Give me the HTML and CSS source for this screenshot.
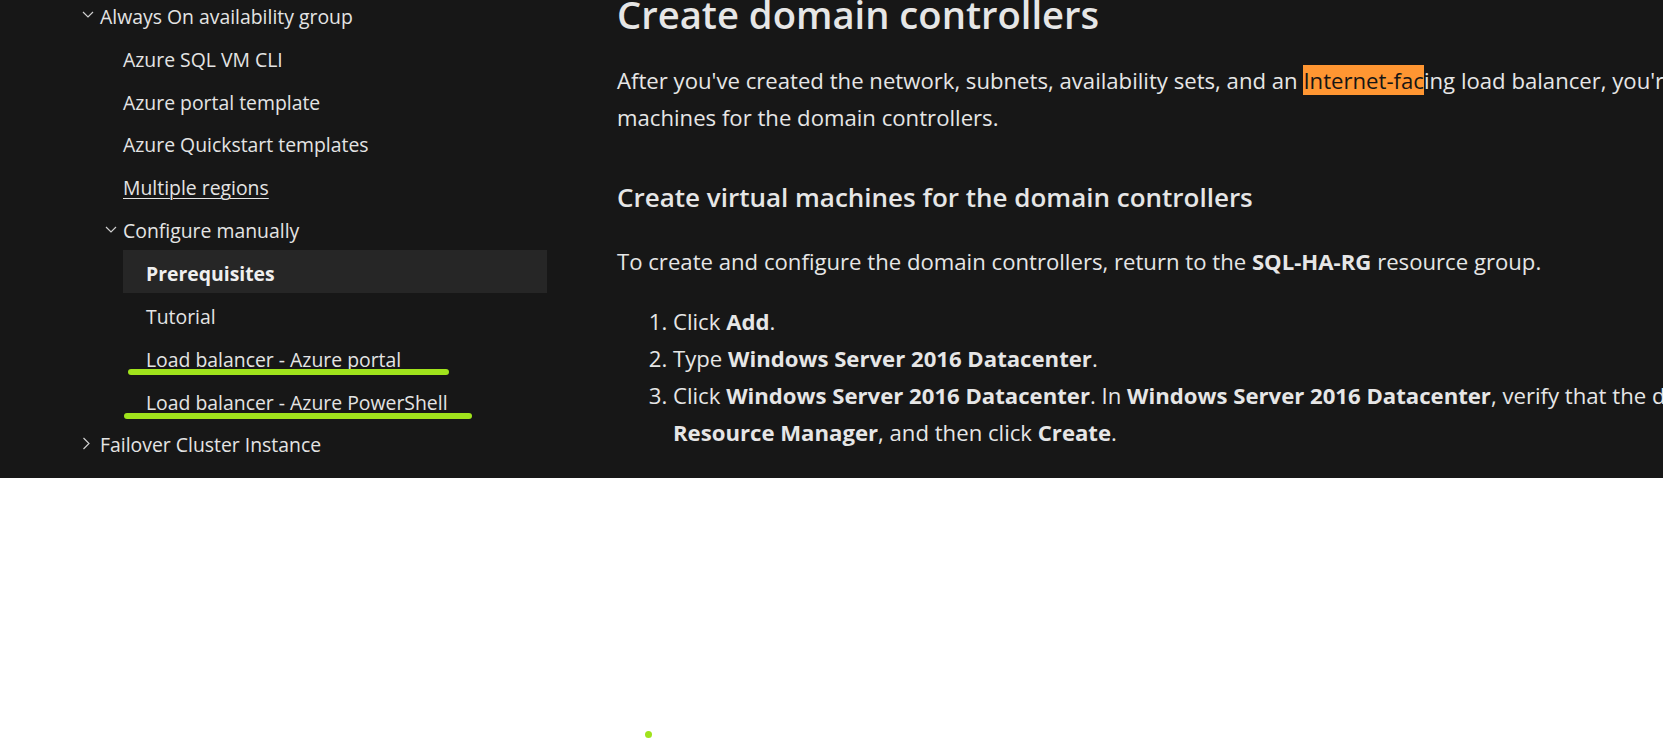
FILE: index.html
```html
<!DOCTYPE html>
<html lang="en">
<head>
<meta charset="utf-8">
<title>Create domain controllers</title>
<link rel="stylesheet" href="styles.css">
</head>
<body>
<div class="frame">
  <nav class="toc">
    <ul class="toc-list">
      <li class="row lvl1"><span class="chev"><svg width="12" height="7" viewBox="0 0 12 7"><path d="M1 1l5 5 5-5" fill="none" stroke="#cfcfcf" stroke-width="1.2"/></svg></span><span>Always On availability group</span></li>
      <li class="row lvl2"><span class="chev"></span><span>Azure SQL VM CLI</span></li>
      <li class="row lvl2"><span class="chev"></span><span>Azure portal template</span></li>
      <li class="row lvl2"><span class="chev"></span><span>Azure Quickstart templates</span></li>
      <li class="row lvl2"><span class="chev"></span><span class="link">Multiple regions</span></li>
      <li class="row lvl2"><span class="chev"><svg width="12" height="7" viewBox="0 0 12 7"><path d="M1 1l5 5 5-5" fill="none" stroke="#cfcfcf" stroke-width="1.2"/></svg></span><span>Configure manually</span></li>
      <li class="row lvl3 active"><span>Prerequisites</span></li>
      <li class="row lvl3"><span>Tutorial</span></li>
      <li class="row lvl3"><span>Load balancer - Azure portal</span><span class="mark mark-a"></span></li>
      <li class="row lvl3"><span>Load balancer - Azure PowerShell</span><span class="mark mark-b"></span></li>
      <li class="row lvl1"><span class="chev"><svg width="8" height="13" viewBox="0 0 8 13"><path d="M1.5 1l5.5 5.5-5.5 5.5" fill="none" stroke="#cfcfcf" stroke-width="1.2"/></svg></span><span>Failover Cluster Instance</span></li>
    </ul>
  </nav>
  <main class="article">
    <h1>Create domain controllers</h1>
    <p class="intro">After you've created the network, subnets, availability sets, and an <mark class="find">Internet-fac</mark>ing load balancer, you're ready to create virtual<br>machines for the domain controllers.</p>
    <h2>Create virtual machines for the domain controllers</h2>
    <p class="body">To create and configure the domain controllers, return to the <b>SQL-HA-RG</b> resource group.</p>
    <ol class="steps">
      <li>Click <b>Add</b>.</li>
      <li>Type <b>Windows Server 2016 Datacenter</b>.</li>
      <li>Click <b>Windows Server 2016 Datacenter</b>. In <b>Windows Server 2016 Datacenter</b>, verify that the deployment model is<br><b>Resource Manager</b>, and then click <b>Create</b>.</li>
    </ol>
  </main>
</div>
<span class="dot"></span>
</body>
</html>
```

FILE: styles.css
```css
html, body {
  margin: 0;
  padding: 0;
  background: #ffffff;
  overflow: hidden;
}

body {
  width: 1663px;
  height: 739px;
  position: relative;
  font-family: "Open Sans", "Noto Sans", sans-serif;
}

.frame {
  height: 478px;
  background: #171717;
  display: flex;
  overflow: hidden;
}

/* sidebar */
.toc {
  flex: 0 0 547px;
  box-sizing: border-box;
  padding-left: 82px;
}

.toc-list {
  list-style: none;
  margin: -7px 0 0;
  padding: 0;
}

.row {
  position: relative;
  display: flex;
  align-items: center;
  box-sizing: border-box;
  height: 42.85px;
  padding-top: 4px;
  font-size: 19.4px;
  color: #e4e4e4;
  white-space: nowrap;
}

.chev {
  flex: none;
  width: 18px;
  display: flex;
  align-items: center;
  padding-bottom: 3px;
}

.lvl2 {
  padding-left: 23px;
}

.lvl3 {
  margin-left: 41px;
  padding-left: 23px;
}

.active {
  background: #262626;
  font-weight: 700;
  color: #efefef;
}

.link {
  text-decoration: underline;
  text-underline-offset: 3px;
  text-decoration-thickness: 1px;
}

.mark {
  position: absolute;
  height: 6px;
  border-radius: 3px;
  background: #a0e31c;
}

.mark-a {
  left: 5px;
  width: 321px;
  top: 33px;
}

.mark-b {
  left: 1px;
  width: 348px;
  top: 34px;
}

/* article */
.article {
  flex: none;
  width: 1700px;
  box-sizing: border-box;
  padding-left: 70px;
  color: #e6e6e6;
  white-space: nowrap;
}

.article h1 {
  margin: -8px 0 0;
  font-size: 38.2px;
  line-height: 44.4px;
  font-weight: 600;
}

.article p {
  margin: 0;
  font-size: 22.15px;
  line-height: 37px;
}

.intro {
  margin-top: 26px !important;
}

.article h2 {
  margin: 44px 0 0;
  font-size: 26px;
  line-height: 34px;
  font-weight: 600;
}

.body {
  margin-top: 29px !important;
}

.article b {
  font-weight: 700;
}

.find {
  background: #ff9632;
  color: #151515;
}

.steps {
  margin: 23px 0 0;
  padding-left: 56px;
  font-size: 22.15px;
  line-height: 37px;
}

.steps li {
  margin: 0;
}

.dot {
  position: absolute;
  left: 645px;
  top: 731px;
  width: 7px;
  height: 7px;
  border-radius: 50%;
  background: #a0e31c;
}
```
